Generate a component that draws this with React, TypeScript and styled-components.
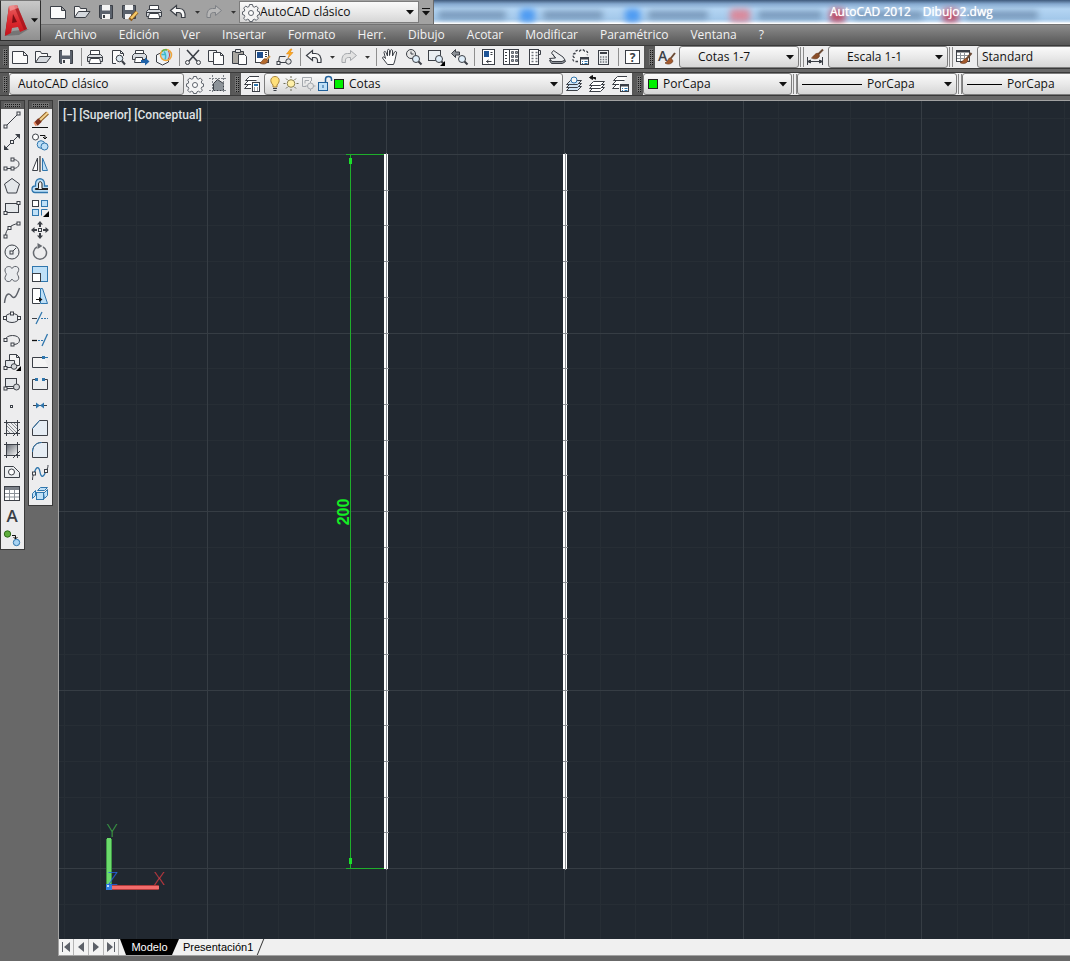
import React from 'react';
import styled, { createGlobalStyle } from 'styled-components';

const Global = createGlobalStyle`
  * { box-sizing: border-box; }
  body { margin: 0; background: #686868; }
  button, select { font: inherit; color: inherit; margin: 0; }
`;

const INK = '#3b3f46';
const BLUE = '#2f76ad';
const SKY = '#bfe0f7';

const Page = styled.div`
  display: flex;
  flex-direction: column;
  min-height: 100vh;
  overflow: hidden;
  font: 12px/16px 'Open Sans', 'Noto Sans', sans-serif;
  color: #111;
`;

/* ---------- header ---------- */

const Header = styled.header`
  display: grid;
  grid-template-columns: 41px minmax(0, 1fr);
  height: 45px;
  background: linear-gradient(#a2a2a2 24px, #5a5a5a 24px, #8c8c8c 25px, #565656 45px);
`;

const AppButton = styled.button`
  display: flex;
  align-items: center;
  width: 41px;
  height: 41px;
  padding: 0 0 0 1px;
  gap: 2px;
  border: 1px solid #2e2e2e;
  border-top-color: #777;
  background: linear-gradient(#c9c9c9, #8f8f8f);
`;

const HeaderRows = styled.div`
  display: flex;
  flex-direction: column;
  min-width: 0;
`;

const TitleRow = styled.div`
  display: flex;
  height: 24px;
`;

const QuickAccess = styled.div`
  display: flex;
  align-items: center;
  padding-left: 6px;
  border-right: 1px solid #6a6a6a;
`;

const Glass = styled.div`
  flex: 1;
  min-width: 0;
  display: grid;
  overflow: hidden;
  background: linear-gradient(#3f5a7c, #86a9cf 4px, #b4d5f3 9px, #a3c8ea 19px, #cfe2f4 22px, #fff 23px);
`;

const GlassTabs = styled.div`
  grid-area: 1 / 1;
  display: flex;
  align-items: center;
  gap: 8px;
  padding: 6px 0 0 4px;
  filter: blur(3px);
  overflow: hidden;
`;

const Smudge = styled.span<{ $w: number; $color?: string; $gap?: number }>`
  flex: none;
  width: ${p => p.$w}px;
  height: ${p => (p.$color ? 13 : 8)}px;
  margin-left: ${p => p.$gap ?? 0}px;
  border-radius: 3px;
  background: ${p => p.$color ?? 'rgba(70, 98, 132, 0.5)'};
`;

const Title = styled.h1`
  grid-area: 1 / 1;
  display: flex;
  gap: 12px;
  margin: 0;
  padding: 4px 0 0 396px;
  font-size: 12px;
  font-weight: 400;
  line-height: 16px;
  white-space: nowrap;
  color: #fff;
  text-shadow: 0 0 1px #fff;
  z-index: 1;
`;

const MenuBar = styled.nav`
  display: flex;
  gap: 22px;
  padding: 3px 0 0 14px;
`;

const MenuItem = styled.button`
  padding: 0;
  border: 0;
  background: none;
  color: #f2f2f2;
  line-height: 16px;
  white-space: nowrap;
`;

/* ---------- tool rows ---------- */

const ToolRow = styled.div`
  display: flex;
  height: 24px;
  margin-bottom: 3px;
  border: solid #3a3a3a;
  border-width: 1px 0;
  background: #565656;
`;

const Bar = styled.div<{ $grow?: boolean; $gap?: number }>`
  display: flex;
  align-items: stretch;
  flex: ${p => (p.$grow ? '1 0 auto' : 'none')};
  margin-right: ${p => p.$gap ?? 0}px;
  background: #ededee;
`;

const Grip = styled.span<{ $dir?: 'h' | 'v' }>`
  flex: none;
  width: ${p => (p.$dir === 'h' ? 'auto' : '9px')};
  height: ${p => (p.$dir === 'h' ? '8px' : 'auto')};
  border: solid #595959;
  border-width: ${p => (p.$dir === 'h' ? '2px 3px' : '3px 2px 3px 3px')};
  background:
    linear-gradient(90deg, #737373 1px, transparent 1px) 0 0 / 2px 2px,
    linear-gradient(#737373 1px, #161616 1px) 0 0 / 2px 2px;
`;

const Rule = styled.span`
  flex: none;
  width: 6px;
  margin: 2px 0;
  background: linear-gradient(#8f8f8f, #8f8f8f) center / 1px 100% no-repeat;
`;

const Rails = styled.span`
  flex: none;
  width: 4px;
  margin: 1px 0 1px 1px;
  border: solid #8a8a8a;
  border-width: 0 1px;
`;

const IconButton = styled.button<{ $w?: number }>`
  display: flex;
  align-items: center;
  justify-content: flex-start;
  flex: none;
  width: ${p => p.$w ?? 23}px;
  height: 22px;
  padding: 0 0 0 2px;
  border: 0;
  background: none;
  color: ${INK};
`;

const CaretButton = styled.button<{ $w?: number }>`
  display: flex;
  align-items: center;
  justify-content: center;
  flex: none;
  width: ${p => p.$w ?? 12}px;
  padding: 0;
  border: 0;
  background: none;
  color: #333;
`;

const Combo = styled.label<{ $w: number; $grow?: boolean; $pad?: number; $flat?: boolean }>`
  display: flex;
  align-items: center;
  flex: ${p => (p.$grow ? '1 0 auto' : 'none')};
  width: ${p => p.$w}px;
  height: 22px;
  padding: 0 4px 0 ${p => p.$pad ?? 6}px;
  border: 1px solid #7d7d7d;
  border-radius: ${p => (p.$flat ? 0 : 3)}px;
  background: linear-gradient(#fafafa, #e9e9e9 50%, #d6d6d6);
  color: #111;
`;

const Select = styled.select`
  appearance: none;
  flex: 1;
  min-width: 0;
  height: 18px;
  padding: 0;
  border: 0;
  background: none;
  line-height: 16px;
`;

const Swatch = styled.span`
  flex: none;
  width: 10px;
  height: 10px;
  margin-right: 5px;
  border: 1px solid #222;
  background: #00f000;
`;

const Stroke = styled.span<{ $w: number }>`
  flex: none;
  width: ${p => p.$w}px;
  height: 1px;
  margin-right: 5px;
  background: #000;
`;

/* ---------- workspace ---------- */

const Workspace = styled.main`
  flex: 1;
  display: flex;
  align-items: stretch;
  padding: 1px 0 5px;
  background: #686868;
`;

const Palette = styled.div<{ $gap: number }>`
  display: flex;
  flex-direction: column;
  align-self: flex-start;
  flex: none;
  width: 25px;
  margin-right: ${p => p.$gap}px;
  border: 1px solid #3a3a3a;
  background: #ededee;
`;

const Sheet = styled.section`
  flex: 1;
  min-width: 0;
  display: flex;
  flex-direction: column;
  border: solid #a2a2a2;
  border-width: 1px 0 1px 1px;
`;

const Viewport = styled.div`
  flex: 1;
  display: grid;
  min-height: 400px;
  background: #212830;
`;

const Drawing = styled.svg`
  grid-area: 1 / 1;
  width: 100%;
  height: 100%;
  min-height: 838px;
`;

const ViewControls = styled.div`
  grid-area: 1 / 1;
  display: flex;
  align-self: start;
  justify-self: start;
  gap: 3px;
  padding: 6px 0 0 4px;
  font-family: Roboto, 'Open Sans', sans-serif;
  font-weight: 500;
  z-index: 1;
`;

const ViewControl = styled.button`
  padding: 0;
  border: 0;
  background: none;
  color: #dfe2e4;
  line-height: 16px;
`;

const TabStrip = styled.div`
  display: flex;
  height: 16px;
  font: 11px/16px 'Liberation Sans', Arial, sans-serif;
  background: #f0f0f0;
`;

const TabNav = styled.button`
  display: flex;
  align-items: center;
  justify-content: center;
  width: 15px;
  padding: 0;
  border: solid #b5b5b5;
  border-width: 0 1px 0 0;
  background: #f3f3f3;
  color: #5c6068;
`;

const ActiveTab = styled.button`
  width: 59px;
  margin-left: 1px;
  padding: 0;
  border: 0;
  background: #000;
  color: #fff;
  line-height: 16px;
  clip-path: polygon(0 0, 100% 0, 52px 100%, 6px 100%);
`;

const Tab = styled.button`
  display: flex;
  justify-content: space-between;
  width: 82px;
  padding: 0 0 0 4px;
  border: 0;
  background: none;
  color: #000;
  line-height: 16px;

  &::after {
    content: '';
    width: 1px;
    height: 16px;
    background: #333;
    transform: skewX(-22deg);
  }
`;

/* ---------- icons ---------- */

const gear = (
  <>
    <path
      d="M7.500 1.500h3l.4 2 1.500.7 1.900-1.100 2 2-1.100 1.900.6 1.400 1.700.5v2.600l-1.700.5-.6 1.400 1.100 1.900-2 2-1.900-1.100-1.500.7-.4 1.600h-3l-.4-1.600-1.500-.7-1.900 1.100-2-2 1.100-1.900-.6-1.400-1.700-.5V8.900l1.700-.5.6-1.400-1.100-1.900 2-2 1.900 1.100 1.500-.7z"
      fill="#f4f4f4"
      stroke="#5f646c"
    />
    <circle cx="9" cy="10" r="2.500" stroke="#5f646c" fill="#fff" />
  </>
);

const node = (x: number, y: number) => <rect x={x - 1.5} y={y - 1.5} width="3" height="3" fill="#f4f4f4" />;
const layers = (y: number, fill = '#fff') => (
  <>
    <path d={`M1.500 ${y + 9.5}l4-4h11l-4 4z`} fill={fill} />
    <path d={`M1.500 ${y + 6.5}l4-4h11l-4 4z`} fill={fill} />
    <path d={`M1.500 ${y + 3.5}l4-4h11l-4 4z`} fill={fill} />
  </>
);
const brush = (
  <>
    <path d="M16.500 5l-5 6" stroke="#6b4a34" strokeWidth="2" />
    <path d="M12 10.500c-3-1-3 3-7 4 3 2 7 1 8-2z" fill="#a3592d" stroke="#6b3b1c" strokeWidth=".7" />
  </>
);
const zoomLens = (
  <>
    <circle cx="12" cy="11" r="3.500" fill="#dfeefa" />
    <path d="M14.500 13.500l3 3" strokeWidth="2" />
  </>
);
const cardIcon = (
  <>
    <rect x="9.500" y="9.500" width="8" height="7" fill="#fff" />
    <path d="M9.500 10.500h8" strokeWidth="2" />
    <path d="M11 13.500h1m1.500 0h3M11 15.500h1m1.500 0h3" stroke={BLUE} />
  </>
);

const glyphs: Record<string, React.ReactNode> = {
  new: <path d="M1.500 3.500h11l4 4v8h-15zM12.500 3.500v4h4" fill="#fbfbfb" />,
  open: (
    <>
      <path d="M1.500 14.500v-11h5l1 2h6v3" fill="#f6f6f6" />
      <path d="M1.500 14.500l4-6h11.500l-4.500 6z" fill="#d5d9de" />
    </>
  ),
  save: (
    <>
      <path d="M2.500 2.500h13v13h-12l-1-1z" fill="#5a616c" />
      <rect x="5" y="2" width="8" height="5.500" fill="#f4f4f4" stroke="none" />
      <rect x="5" y="11" width="8" height="5" fill="#f4f4f4" stroke="none" />
      <rect x="6" y="12" width="2" height="3" fill={INK} stroke="none" />
    </>
  ),
  saveas: (
    <>
      <path d="M1.500 2.500h13v13h-12l-1-1z" fill="#5a616c" />
      <rect x="4" y="2" width="8" height="5" fill="#f4f4f4" stroke="none" />
      <rect x="4" y="11" width="6" height="5" fill="#f4f4f4" stroke="none" />
      <path d="M16 9l-5.500 6-1.500 2" stroke="#8a5a20" strokeWidth="4" />
      <path d="M16 9l-6 6.500" stroke="#f4c867" strokeWidth="2.500" />
    </>
  ),
  print: (
    <>
      <path d="M4.500 7V2.500h9V7" fill="#fff" />
      <path d="M3.500 6.500h11l2 2v5h-15v-5z" fill="#d9dce0" />
      <path d="M4.500 10.500h9l1.500 5h-12z" fill="#fff" />
      <path d="M2 9.500h14" />
    </>
  ),
  preview: (
    <>
      <path d="M7 15.500H3.500v-13h8l3 3V8" fill="#fbfbfb" />
      <path d="M11.500 2.500v3h3" />
      <circle cx="10.500" cy="10.500" r="3.300" fill="#dde8f0" />
      <path d="M13 13l3 3.500" strokeWidth="2" />
    </>
  ),
  publish: (
    <>
      <path d="M3.500 6V2.500h8V6" fill="#fff" />
      <path d="M2.500 5.500h10l2 2v4h-14v-4z" fill="#d9dce0" />
      <path d="M3.500 9.500h7v5h-8z" fill="#fff" />
      <path d="M9 12h4V9.500l4.500 4-4.500 4V15H9z" fill="#1f62a8" stroke="none" />
    </>
  ),
  globe: (
    <>
      <path d="M1.500 7l6-3 6 3v7l-6 3-6-3z" fill="#f2f4f6" />
      <circle cx="11" cy="7" r="5.500" fill="#a9dcf2" stroke="#f0a43c" strokeWidth="1.500" />
      <path d="M9 3.500c2 2 2 6 1 8M6.500 6.500h4" stroke="#3fb7c9" strokeWidth="1.500" />
      <path d="M13 3c2 2 2 6 0 8" stroke="#d8403a" />
      <path d="M7 3.500c1-1.500 3-2 5-1.500" stroke="#55b04c" strokeWidth="1.500" />
    </>
  ),
  cut: (
    <>
      <path d="M3 2l10 11M15 2L5 13" strokeWidth="1.600" />
      <circle cx="3.500" cy="14.500" r="2" />
      <circle cx="14.500" cy="14.500" r="2" />
    </>
  ),
  copy: (
    <>
      <path d="M1.500 2.500h8v11h-8z" fill="#f4f4f4" />
      <path d="M6.500 4.500h7l3 3v9h-10zM13.500 4.500v3h3" fill="#fdfdfd" />
    </>
  ),
  paste: (
    <>
      <path d="M2.500 3.500h11v12h-11z" fill="#a9a6a0" />
      <path d="M5.500 1.500h5v3h-5z" fill="#e6e6e6" />
      <path d="M8.500 6.500h6l2 2v8h-8z" fill="#fdfdfd" />
    </>
  ),
  match: (
    <>
      <rect x="2.500" y="2.500" width="13" height="12" fill="#fff" />
      <rect x="4" y="4" width="6" height="6" fill="#1f4f8f" stroke="none" />
      <path d="M12 4.500h2m-2 2h2m-2 2h2" />
      <path d="M17 8l-4 4" stroke="#d09850" strokeWidth="2" />
      <path d="M13 11c-3-1-3 2-6 4 3 2 7 1 8-2z" fill="#b56a2c" stroke="#6b3b1c" strokeWidth=".7" />
    </>
  ),
  blockedit: (
    <>
      <path d="M9.500 8.500h-6l-1 6H10" />
      {node(2.5, 15)}
      <circle cx="12.500" cy="13.500" r="2.700" fill="#e6e6e6" />
      <path d="M14.500 1l-4 5h3l-1.500 4 5-5.500h-3l2-3.500z" fill="#ffb01e" stroke="#e07f10" strokeWidth=".6" />
    </>
  ),
  undo: <path d="M1.500 7.500l6-5v3h3c4 0 6 3 5.500 9h-3.500c.5-4-1-5-3-5h-2v3z" fill="#f8f8f8" strokeWidth="1.200" />,
  redo: (
    <path d="M16.500 7.500l-6-5v3h-3c-4 0-6 3-5.500 9h3.500c-.5-4 1-5 3-5h2v3z" fill="#e2e2e2" stroke="#a5a8ac" />
  ),
  redoDark: (
    <path d="M16.500 7.500l-6-5v3h-3c-4 0-6 3-5.500 9h3.500c-.5-4 1-5 3-5h2v3z" fill="#b8b8b8" stroke="#7d8085" />
  ),
  pan: (
    <path
      d="M6.500 16.500L1.500 10c0-1.500 1.500-1.500 3 .5L3 4.500c0-1.500 1.500-1.500 2 0L6.500 8 6.500 2.500c0-1.500 2-1.500 2 0v5l1-5c.5-1.500 2-1 2 .5L11.500 8l2-4c1-1 2.500-.5 2 1-1 4-1.500 8.500-3 11.500z"
      fill="#fbfbfb"
    />
  ),
  zoomRt: (
    <>
      <circle cx="7" cy="6" r="4.500" fill="#e6e6e6" />
      <path d="M7 3.500V6h2.500" />
      {zoomLens}
    </>
  ),
  zoomWin: (
    <>
      <rect x="1.500" y="2.500" width="12" height="10" fill="#e9eef2" />
      {zoomLens}
      <path d="M18 13v5h-5z" fill="#000" stroke="none" />
    </>
  ),
  zoomPrev: (
    <>
      <path d="M1.500 5.500l4-4v2.500h4v3h-4V9.500z" fill="#8d9197" />
      {zoomLens}
    </>
  ),
  props: (
    <>
      <rect x="3.500" y="1.500" width="12" height="15" fill="#fff" />
      <rect x="5" y="3" width="5" height="6" fill="#1f5597" stroke="none" />
      <path d="M11.500 4.500h2m-2 2h2M7.500 13.500h5m-5 0l2-1.500m-2 1.500l2 1.500" />
    </>
  ),
  design: (
    <>
      <rect x="1.500" y="1.500" width="15" height="15" fill="#fff" />
      <path d="M7.500 2v14M3 4.500h2m-2 3h2m-2 3h2m-2 3h2" />
      <path d="M9.500 3.500h2v2h-2zm4 0h2v2h-2zm-4 4h2v2h-2zm4 0h2v2h-2zm-4 4h2v2h-2zm4 0h2v2h-2z" fill="#9aa0a8" stroke="#5f646c" />
    </>
  ),
  toolpal: (
    <>
      <rect x="4.500" y="1.500" width="9" height="15" fill="#fff" />
      <path d="M13.500 2.500h2v4h-2" />
      <path d="M6.500 4.500h2m2 0h2m-6 3h2m2 0h2m-6 3h2m2 0h2m-6 3h2m2 0h2" strokeWidth="1.500" stroke="#70757c" />
    </>
  ),
  sheet: (
    <>
      <path d="M1.500 12.500l2 3h11l3-2-1-2z" fill="#8d9197" />
      <path d="M3.500 5l2-2.500 9.500 6.500 2 3-3 1.500H4l-2.500-3 6-.5z" fill="#eceef0" />
      <path d="M7.500 10l-3-4" />
    </>
  ),
  markup: (
    <>
      <path
        d="M7 13.500H4c-2 0-3-3-1-4-2-2-1-4 1-4 0-3 3-4 4.500-2.500 2-2 4-1.500 5 0 3-.5 4 2 2.500 4"
        strokeDasharray="2.500 1.500"
        strokeWidth="1.300"
        fill="#f4f4f4"
      />
      {cardIcon}
    </>
  ),
  calc: (
    <>
      <rect x="4.500" y="2.500" width="10" height="14" fill="#eef0f2" />
      <rect x="6" y="4" width="7" height="2" fill={INK} stroke="none" />
      <path d="M6 9h7M6 11.500h7M6 14h7" strokeWidth="1.500" strokeDasharray="1.500 1.200" stroke="#70757c" />
    </>
  ),
  help: (
    <>
      <rect x="2.500" y="2.500" width="14" height="13" fill="#fff" />
      <text x="9.500" y="13.500" textAnchor="middle" fontSize="12" fontWeight="700" fill={INK} stroke="none">?</text>
    </>
  ),
  textStyle: (
    <>
      <text x="1" y="13" fontSize="14" fontWeight="600" fill={INK} stroke="none">A</text>
      <path d="M18 5l-4 5" stroke="#6b4a34" strokeWidth="2" />
      <path d="M14 10c-3-1-2 3-6 5 3 2 7 1 8-2z" fill="#a3592d" stroke="#6b3b1c" strokeWidth=".7" />
    </>
  ),
  dimStyle: (
    <>
      <path d="M1.500 9v8M16.500 9v8M1.500 13.500h15M1.500 13.500l3-1.500v3zM16.500 13.500l-3-1.500v3z" fill={INK} />
      <path d="M17 1.500l-5 5" stroke="#6b4a34" strokeWidth="2" />
      <path d="M12.500 5.500c-3-1-4 2-7 4.500 3 1.500 7 1 8-2z" fill="#8a4d28" stroke="#6b3b1c" strokeWidth=".7" />
    </>
  ),
  tableStyle: (
    <>
      <rect x="1.500" y="2.500" width="13" height="11" fill="#fff" />
      <path d="M1.500 3.500h13" strokeWidth="2" />
      <path d="M2 7.500h12M2 10.500h8M5.500 5v8M9.500 5v6" stroke="#8b9198" />
      {brush}
    </>
  ),
  gear,
  workspace: (
    <>
      <path d="M4.500 8.500l4-4 6 4v7h-10z" fill="#8d9399" />
      <path d="M3.500 0v18M14.500 0v18M0 3.500h18M0 15.500h18" strokeDasharray="2 1" stroke="#7d8288" />
    </>
  ),
  layerProps: (
    <>
      <path d="M8 13.500H1.500l4-4H8M8 9.500H1.500l4-4h8M13 5.500H2.500l4-4H16" fill="#fff" />
      <rect x="9.500" y="7.500" width="7" height="9" fill="#fff" />
      <rect x="11" y="9" width="4" height="2" fill={BLUE} stroke="none" />
      <path d="M11 13h1m2 0h1m-4 2h1m2 0h1" />
    </>
  ),
  layerCurrent: (
    <>
      {layers(6, '#cfe4f5')}
      <circle cx="9" cy="5" r="3" fill="#f4f4f4" stroke={BLUE} />
    </>
  ),
  layerPrev: (
    <>
      {layers(7)}
      <path d="M2.500 2.500h5v2M1.500 2.500l3-2v4z" fill="#111" stroke="#111" />
    </>
  ),
  layerStates: (
    <>
      <path d="M8 13.500H1.500l4-4H8M8 9.500H1.500l4-4h8M13 5.500H2.500l4-4H16" fill="#fff" />
      {cardIcon}
    </>
  ),
  line: <><path d="M3.500 14.500l11-11" />{node(2.5, 15.5)}{node(15.5, 2.5)}</>,
  xline: (
    <>
      <path d="M2 16L16 2" />
      <path d="M1 17v-5l5 5zM17 1v5l-5-5z" fill={INK} stroke="none" />
      {node(9, 9)}
    </>
  ),
  pline: <><path d="M3 13.500h7c8 0 8-9 0-9H9" />{node(2.5, 13.5)}{node(9.5, 13.5)}{node(9.5, 4.5)}</>,
  polygon: <path d="M9 1.500l7.500 5.500-3 9h-9l-3-9z" fill="#e4e7ea" />,
  rect: <><rect x="2.500" y="4.500" width="13" height="9" fill="#e4e7ea" />{node(2.5, 14)}{node(15.5, 4)}</>,
  arc: <><path d="M2.500 15.500c0-7 5-12 13-13" />{node(2.5, 15.5)}{node(6.5, 7)}{node(15.5, 2.5)}</>,
  circle: <><circle cx="9" cy="9" r="7" fill="#eceef0" /><path d="M9 9l4-4" />{node(8.5, 9.5)}</>,
  cloud: (
    <path
      d="M9 3.500c2-4 9-2 6 3.500-1 1.500-1 2 0 3.500 3 5-4 8-6 3.500-2 5-9 2-6.500-3 1-1.500 1-2 0-3.500C0 2 7-.5 9 3.500z"
      fill="#e9ebee"
      stroke="#5c6068"
    />
  ),
  spline: <path d="M1.500 16c1-9 4-11 7-7s5 0 8-8" strokeWidth="1.400" stroke="#5c6068" />,
  ellipse: <><ellipse cx="9" cy="9" rx="7" ry="4.500" fill="#e9ebee" />{node(2, 9)}{node(16, 9)}{node(9, 4.5)}</>,
  ellipseArc: <><path d="M2.500 9c0-6 14-6 14 0 0 4-4 4.500-7 4.500" />{node(2.5, 9)}{node(9.5, 13.5)}</>,
  insert: (
    <>
      <path d="M6.500 7V1.500h7l3 3v8h-4M13.500 1.500v3h3" fill="#f4f4f4" />
      <path d="M2.500 14.500v-7h9v5" fill="#e2e5e8" />
      <path d="M3 14.500h7" />
      <circle cx="11" cy="13.500" r="2.800" fill="#d4d7da" />
      {node(2.5, 15)}
      <path d="M18 13v5h-5z" fill="#000" stroke="none" />
    </>
  ),
  block: (
    <>
      <rect x="2.500" y="3.500" width="11" height="8" fill="#e2e5e8" />
      <path d="M3 13.500h8" />
      <circle cx="13.500" cy="12" r="3" fill="#d4d7da" />
      {node(2.5, 13.5)}
    </>
  ),
  point: <rect x="7.500" y="8.500" width="2" height="2" fill="#fff" />,
  hatch: (
    <>
      <path d="M4 11l3 3M4 7l7 7M4 4l10 10M8 4l6 6M11 4l3 3" stroke="#8b9096" />
      <path d="M3.500 1v16M14.500 1v16M1 3.500h16M1 14.500h16M10 17l7-7" />
    </>
  ),
  gradient: (
    <>
      <rect x="4" y="4" width="10" height="10" fill="url(#fade)" stroke="none" />
      <path d="M3.500 1v16M14.500 1v16M1 3.500h16M1 14.500h16M10 17l7-7" />
    </>
  ),
  region: <><path d="M1.500 3.500h9l6 6v5h-15z" fill="#eceef0" /><circle cx="8.500" cy="9" r="3" fill="#fff" /></>,
  table: (
    <>
      <rect x="1.500" y="1.500" width="15" height="14" fill="#fff" />
      <rect x="2" y="2" width="14" height="3" fill="#7b8088" stroke="none" />
      <path d="M2 8.500h14M2 12h14M6.500 5v10M11.500 5v10" stroke="#8b9198" />
    </>
  ),
  text: <text x="9" y="15" textAnchor="middle" fontSize="17" fontWeight="600" fill={INK} stroke="none">A</text>,
  addSel: (
    <>
      <circle cx="4.500" cy="5" r="3.200" fill="#5fae3c" stroke="#2f6b1c" />
      <path d="M9 6.500h3.500V10M10.500 8l2 2 2-2" stroke="#111" />
      <circle cx="13.500" cy="13.500" r="3.200" fill="#a9d4f4" stroke={BLUE} />
    </>
  ),
  erase: (
    <>
      <path d="M16.500 2L8 10" stroke="#8a5a20" strokeWidth="4" />
      <path d="M17 1.500L8 10" stroke="#f3d28e" strokeWidth="2" />
      <path d="M9 9l-4 4" stroke="#7b2f1c" strokeWidth="5" />
      <path d="M5 12.500l-1.500 1" stroke="#e88d66" strokeWidth="4" />
      <path d="M1 16.500h16" stroke="#111" />
    </>
  ),
  copyObj: (
    <>
      <circle cx="4.500" cy="4" r="3" fill="#fff" />
      <path d="M9 2.500h5V6M12 4l2 2 2-2" stroke="#111" />
      <circle cx="10" cy="11.500" r="3.800" fill={SKY} stroke={BLUE} />
      <circle cx="13.500" cy="13.500" r="3.500" fill={SKY} stroke={BLUE} />
    </>
  ),
  mirror: (
    <>
      <path d="M6.500 3v12.500h-5z" fill="#fff" />
      <path d="M11.500 3v12.500h5z" fill={SKY} stroke={BLUE} />
      <path d="M9 1v16" stroke="#111" />
    </>
  ),
  offset: (
    <>
      <path d="M17 15.500H4c-4 0-4-6.500 0-6.500h.5V7c0-7 9-7 9 0v2H17" fill={SKY} stroke={BLUE} strokeWidth="1.300" />
      <path d="M17 12.500H5c-1.500 0-1.500-1 0-1h2.500V7c0-3 3.500-3 3.500 0v4.500h6" fill="#f4f4f4" stroke="#222" />
    </>
  ),
  array: (
    <>
      <rect x="1.500" y="1.500" width="6" height="6" fill="#fff" />
      <rect x="10.500" y="1.500" width="6" height="6" fill={SKY} stroke={BLUE} />
      <rect x="1.500" y="10.500" width="6" height="6" fill={SKY} stroke={BLUE} />
      <path d="M10.500 16.500v-6h6" stroke={BLUE} />
      <path d="M18 12v6h-6z" fill="#000" stroke="none" />
    </>
  ),
  move: (
    <>
      <path d="M9 2v4M9 12v4M2 9h4M12 9h4" strokeWidth="2" />
      <path d="M9 0l3 3.500H6zM9 18l3-3.500H6zM0 9l3.500-3v6zM18 9l-3.500-3v6z" fill={INK} stroke="none" />
      {node(9, 9)}
    </>
  ),
  rotate: (
    <>
      <path d="M12 4a6.500 6.500 0 1 1-6 0" strokeWidth="1.500" stroke="#666a70" />
      <path d="M6.500 0v6l5-3z" fill="#666a70" stroke="none" />
    </>
  ),
  scale: (
    <>
      <rect x="1.500" y="1.500" width="15" height="15" fill={SKY} stroke={BLUE} />
      <rect x="1.500" y="8.500" width="8" height="8" fill="#fff" />
    </>
  ),
  stretch: (
    <>
      <path d="M9 1.500H1.500v15H9" fill="#fff" />
      <path d="M9.500 1.500h2l5 15h-7z" fill={SKY} stroke={BLUE} />
      <path d="M5 12.500h4" stroke="#111" />
      <path d="M8 10l3.500 2.500L8 15z" fill="#111" stroke="none" />
    </>
  ),
  trim: (
    <>
      <path d="M1 9.500h5" />
      <path d="M10 9.500h7" stroke={BLUE} strokeDasharray="2 1" />
      <path d="M5 15l6-12" stroke={BLUE} strokeWidth="1.300" />
    </>
  ),
  extend: (
    <>
      <path d="M1 9.500h5" stroke="#111" strokeWidth="1.300" />
      <path d="M7 9.500h5" stroke={BLUE} strokeDasharray="2 1" />
      <path d="M11 15l5.500-12" stroke={BLUE} strokeWidth="1.300" />
    </>
  ),
  breakPt: (
    <>
      <path d="M17 14.500H1.500v-10H13" fill="#f4f4f4" />
      <path d="M12 4.500h5" stroke={BLUE} />
      <rect x="11" y="3" width="3" height="3" fill={BLUE} stroke="none" />
    </>
  ),
  breakObj: (
    <>
      <path d="M4 4.500H1.500v10h15v-10H14" fill="#eceef0" />
      <rect x="4" y="3" width="3" height="3" fill={BLUE} stroke="none" />
      <rect x="11" y="3" width="3" height="3" fill={BLUE} stroke="none" />
    </>
  ),
  join: (
    <>
      <path d="M2 8.500h14" />
      <path d="M5 5.500l4 3-4 3zM13 5.500l-4 3 4 3z" fill={BLUE} stroke="none" />
    </>
  ),
  chamfer: (
    <>
      <path d="M1.500 16.500v-7l7-8h8v15z" fill="#e6edf4" />
      <path d="M1.500 9.500l7-8" stroke={BLUE} />
    </>
  ),
  fillet: (
    <>
      <path d="M1.500 16.500V11c0-6 4-9.500 9-9.500h6v15z" fill="#e6edf4" />
      <path d="M1.500 11c0-6 4-9.500 9-9.500" stroke={BLUE} />
    </>
  ),
  blend: (
    <>
      <path d="M3 11c2-8 5-8 6-2s4 6 6-2" stroke={BLUE} strokeWidth="1.300" />
      <path d="M1.500 17c0-3 .5-5 1.500-6M15.500 7c1-1 1.500-3 1.500-5" />
      {node(3, 10.5)}
      {node(15, 8)}
    </>
  ),
  explode: (
    <>
      <path d="M6.500 5.500l3-3h7l-3 3zM12.500 8.500l4-4v6l-3 3z" fill={SKY} stroke={BLUE} />
      <rect x="5.500" y="7.500" width="7" height="7" fill={SKY} stroke={BLUE} />
      <path d="M4.500 5.500l-3 3v5l3-3z" fill={SKY} stroke={BLUE} />
    </>
  ),
};

const Icon = ({ name }: { name: string }) => (
  <svg
    width="18"
    height="18"
    viewBox="0 0 18 18"
    fill="none"
    stroke="currentColor"
    overflow="visible"
    aria-hidden="true"
  >
    {glyphs[name]}
  </svg>
);

const Arrow = ({ size = 8 }: { size?: number }) => (
  <svg width={size} height="5" viewBox="0 0 8 5" pointerEvents="none" aria-hidden="true">
    <path d="M0 0h8L4 4.500z" fill="currentColor" />
  </svg>
);

type Tool = [icon: string, label: string] | 'rule' | 'caret';

const Tools = ({ items, width }: { items: Tool[]; width?: number }) => (
  <>
    {items.map((t, i) =>
      t === 'rule' ? (
        <Rule key={i} />
      ) : t === 'caret' ? (
        <CaretButton key={i} aria-label="Más opciones">
          <Arrow size={5} />
        </CaretButton>
      ) : (
        <IconButton key={i} $w={width} aria-label={t[1]}>
          <Icon name={t[0]} />
        </IconButton>
      )
    )}
  </>
);

interface ComboProps {
  label: string;
  value: string;
  width: number;
  pad?: number;
  grow?: boolean;
  flat?: boolean;
  children?: React.ReactNode;
}

const ComboBox = ({ label, value, width, pad, grow, flat, children }: ComboProps) => (
  <Combo $w={width} $pad={pad} $grow={grow} $flat={flat}>
    {children}
    <Select aria-label={label} defaultValue={value}>
      <option>{value}</option>
    </Select>
    <Arrow />
  </Combo>
);

/* ---------- data ---------- */

const quickTools: Tool[] = [
  ['new', 'Nuevo'],
  ['open', 'Abrir'],
  ['save', 'Guardar'],
  ['saveas', 'Guardar como'],
  ['print', 'Trazar'],
  ['undo', 'Deshacer'],
  'caret',
  ['redoDark', 'Rehacer'],
  'caret',
];

const menus = [
  'Archivo', 'Edición', 'Ver', 'Insertar', 'Formato', 'Herr.', 'Dibujo',
  'Acotar', 'Modificar', 'Paramétrico', 'Ventana', '?',
];

const standardTools: Tool[] = [
  ['new', 'Nuevo'], ['open', 'Abrir'], ['save', 'Guardar'], 'rule',
  ['print', 'Trazar'], ['preview', 'Vista preliminar'], ['publish', 'Publicar'], ['globe', 'Impresión 3D'], 'rule',
  ['cut', 'Cortar'], ['copy', 'Copiar'], ['paste', 'Pegar'], ['match', 'Igualar propiedades'],
  ['blockedit', 'Editor de bloques'], 'rule',
  ['undo', 'Deshacer'], 'caret', ['redo', 'Rehacer'], 'caret', 'rule',
  ['pan', 'Encuadre'], ['zoomRt', 'Zoom tiempo real'], ['zoomWin', 'Zoom ventana'], ['zoomPrev', 'Zoom previo'], 'rule',
  ['props', 'Propiedades'], ['design', 'DesignCenter'], ['toolpal', 'Paletas'], ['sheet', 'Conjunto de planos'],
  ['markup', 'Marcas'], ['calc', 'Calculadora'], 'rule',
  ['help', 'Ayuda'],
];

const drawTools: Tool[] = [
  ['line', 'Línea'], ['xline', 'Línea auxiliar'], ['pline', 'Polilínea'], ['polygon', 'Polígono'],
  ['rect', 'Rectángulo'], ['arc', 'Arco'], ['circle', 'Círculo'], ['cloud', 'Nube de revisión'],
  ['spline', 'Spline'], ['ellipse', 'Elipse'], ['ellipseArc', 'Arco elíptico'], ['insert', 'Insertar bloque'],
  ['block', 'Crear bloque'], ['point', 'Punto'], ['hatch', 'Sombreado'], ['gradient', 'Degradado'],
  ['region', 'Región'], ['table', 'Tabla'], ['text', 'Texto'], ['addSel', 'Añadir seleccionado'],
];

const modifyTools: Tool[] = [
  ['erase', 'Borrar'], ['copyObj', 'Copiar'], ['mirror', 'Simetría'], ['offset', 'Desfase'],
  ['array', 'Matriz'], ['move', 'Desplazar'], ['rotate', 'Girar'], ['scale', 'Escala'],
  ['stretch', 'Estirar'], ['trim', 'Recortar'], ['extend', 'Alargar'], ['breakPt', 'Partir en un punto'],
  ['breakObj', 'Partir'], ['join', 'Juntar'], ['chamfer', 'Chaflán'], ['fillet', 'Empalme'],
  ['blend', 'Fusionar curvas'], ['explode', 'Descomponer'],
];

/* ---------- drawing ---------- */

const STEP = 35.7;
const ORIGIN = { x: 327, y: 53 };
const grid = (origin: number, count: number, round: (v: number) => number) =>
  Array.from({ length: count }, (_, n) => {
    const i = n - 10;
    return { pos: round(origin + i * STEP), major: i % 5 === 0 };
  });
const columns = grid(ORIGIN.x, 80, Math.floor);
const rows = grid(ORIGIN.y, 60, Math.round);
const gridColor = (major: boolean) => (major ? '#363d44' : '#272e35');

const Wall = ({ x }: { x: number }) => (
  <g>
    <rect x={x - 2} y="53" width="4" height="715" fill="#fff" />
    <rect x={x} y="52" width="1" height="717" fill="#8b8f94" />
    {rows
      .filter(r => r.pos > 60 && r.pos < 765)
      .map(r => (
        <rect key={r.pos} x={x - 2} y={r.pos} width="5" height="1" fill="#8b8f94" />
      ))}
  </g>
);

const Model = () => (
  <Drawing role="img" aria-label="Dibujo2.dwg">
    {[false, true].map(major => (
      <g key={String(major)} fill={gridColor(major)}>
        {columns.filter(c => c.major === major).map(c => <rect key={c.pos} x={c.pos} y="0" width="1" height="100%" />)}
        {rows.filter(r => r.major === major).map(r => <rect key={r.pos} x="0" y={r.pos} width="100%" height="1" />)}
      </g>
    ))}
    <Wall x={327} />
    <Wall x={506} />
    <g fill="#1fae2b">
      <rect x="291" y="53" width="1" height="715" />
      <rect x="287" y="53" width="38" height="1" />
      <rect x="287" y="767" width="38" height="1" />
      <rect x="290" y="57" width="3" height="6" fill="#1be02a" />
      <rect x="290" y="757" width="3" height="6" fill="#1be02a" />
    </g>
    <text
      transform="translate(290 411) rotate(-90)"
      textAnchor="middle"
      fontFamily="'Liberation Sans', Arial, sans-serif"
      fontSize="16"
      fontWeight="700"
      fill="#14ee24"
    >
      200
    </text>
    <g>
      <rect x="47" y="738" width="6" height="48" fill="#3f9a45" />
      <rect x="48" y="737" width="4" height="48" fill="#6cdb6c" />
      <rect x="52" y="784" width="48" height="5" rx="1" fill="#b23c3c" />
      <rect x="52" y="785" width="48" height="3" fill="#f26c6c" />
      <rect x="47" y="783" width="6" height="6" fill="#2f7fe0" />
      <rect x="48" y="784" width="2" height="2" fill="#bfe0ff" />
      <g fontFamily="Lato, 'Open Sans', sans-serif" fontWeight="300" fontSize="18" textAnchor="middle">
        <text x="53" y="736" fill="#3fa548">Y</text>
        <text x="100" y="784" fill="#d23c44">X</text>
        <text x="54" y="784" fill="#2463d8">Z</text>
      </g>
    </g>
  </Drawing>
);

const navArrows: [string, string][] = [
  ['Primera', 'M1 0h1v10H1zM9 0v10L3 5z'],
  ['Anterior', 'M8 0v10L2 5z'],
  ['Siguiente', 'M2 0v10l6-5z'],
  ['Última', 'M1 0v10l6-5zM8 0h1v10H8z'],
];

/* ---------- page ---------- */

export default function App() {
  return (
    <Page>
      <Global />
      <svg width="0" height="0" style={{ display: 'block' }} aria-hidden="true">
        <linearGradient id="fade" x1="0" y1="0" x2="1" y2="1">
          <stop offset="0" stopColor="#6a6f77" />
          <stop offset="1" stopColor="#f2f2f2" />
        </linearGradient>
        <linearGradient id="logoRed" x1="0" y1="0" x2="0" y2="1">
          <stop offset="0" stopColor="#e86464" />
          <stop offset=".5" stopColor="#dd2a30" />
          <stop offset="1" stopColor="#c3141c" />
        </linearGradient>
      </svg>
      <Header>
        <AppButton aria-label="Menú de la aplicación">
          <svg width="27" height="35" viewBox="0 0 27 35" aria-hidden="true">
            <path d="M2 33l9-5 16-2-10 6z" fill="#5d5d5d" opacity=".6" />
            <path d="M7 3l3 1-4 27-3 1z" fill="#8f1016" />
            <path d="M7 3l8-1 10 24-7 3-2-5-6 1-1 5-6 3z" fill="url(#logoRed)" />
            <path d="M11 11l4 8-5 1z" fill="#7c1016" />
            <path d="M15 2l10 24-3 1L12 3z" fill="#9e141b" opacity=".7" />
            <path d="M7 3l8-1 1 3-8 3z" fill="#f4a0a0" opacity=".7" />
          </svg>
          <Arrow size={7} />
        </AppButton>
        <HeaderRows>
          <TitleRow>
            <QuickAccess>
              <Tools items={quickTools} width={24} />
              <ComboBox label="Espacio de trabajo" value="AutoCAD clásico" width={180} pad={2} flat>
                <Icon name="gear" />
              </ComboBox>
              <CaretButton $w={14} aria-label="Personalizar">
                <svg width="8" height="8" viewBox="0 0 8 8" aria-hidden="true">
                  <path d="M0 0h8v1H0zM0 3h8L4 7.500z" fill="#111" />
                </svg>
              </CaretButton>
            </QuickAccess>
            <Glass>
              <GlassTabs aria-hidden="true">
                <Smudge $w={68} />
                <Smudge $w={15} $color="#4d9af2" $gap={6} />
                <Smudge $w={60} />
                <Smudge $w={15} $color="#4d9af2" $gap={14} />
                <Smudge $w={60} />
                <Smudge $w={20} $color="#d98a9c" $gap={14} />
                <Smudge $w={64} />
                <Smudge $w={15} $color="#c04a64" />
                <Smudge $w={70} />
                <Smudge $w={15} $color="#c04a64" $gap={12} />
                <Smudge $w={72} />
              </GlassTabs>
              <Title>
                <span>AutoCAD 2012</span>
                <span>Dibujo2.dwg</span>
              </Title>
            </Glass>
          </TitleRow>
          <MenuBar>
            {menus.map(m => (
              <MenuItem key={m}>{m}</MenuItem>
            ))}
          </MenuBar>
        </HeaderRows>
      </Header>

      <ToolRow>
        <Grip />
        <Bar $gap={2}>
          <Tools items={standardTools} />
        </Bar>
        <Grip />
        <Bar $grow>
          <IconButton $w={24} aria-label="Estilo de texto"><Icon name="textStyle" /></IconButton>
          <ComboBox label="Estilo de cota" value="Cotas 1-7" width={120} pad={18} />
          <Rails />
          <IconButton $w={24} aria-label="Estilos de cota"><Icon name="dimStyle" /></IconButton>
          <ComboBox label="Escala" value="Escala 1-1" width={120} pad={18} />
          <Rails />
          <IconButton $w={24} aria-label="Estilo de tabla"><Icon name="tableStyle" /></IconButton>
          <ComboBox label="Estilo de tabla" value="Standard" width={120} pad={4} grow />
        </Bar>
      </ToolRow>

      <ToolRow>
        <Grip />
        <Bar $gap={2}>
          <ComboBox label="Espacio de trabajo actual" value="AutoCAD clásico" width={175} pad={8} />
          <Tools items={[['gear', 'Parámetros'], ['workspace', 'Mi espacio de trabajo']]} />
        </Bar>
        <Grip />
        <Bar $gap={2}>
          <Tools items={[['layerProps', 'Propiedades de capas']]} />
          <ComboBox label="Capa" value="Cotas" width={299} pad={4}>
            <svg width="65" height="18" viewBox="0 0 65 18" fill="none" stroke={INK} aria-hidden="true">
              <path d="M4 10C0 6 2 1.500 6 1.500S12 6 8 10v2H4z" fill="#ffe07a" stroke="#a8843c" />
              <path d="M4 13.500h4M4.500 15.500h3" />
              <circle cx="22" cy="8.500" r="3.800" fill="#fff0a8" stroke="#8a8050" />
              <path
                d="M22 1v2M22 14v2M14.500 8.500h2M27.500 8.500h2M17 3.500l1.500 1.500M27 3.500l-1.500 1.500M17 13.500l1.500-1.500M27 13.500l-1.500-1.500"
                stroke="#70705c"
              />
              <path d="M37 11.500h-3.500v-9h9V6" stroke="#a4a8ad" />
              <path d="M36 8.500v-3h4" stroke="#a4a8ad" />
              <circle cx="41.500" cy="11" r="3" fill="#e4e4e4" stroke="#a4a8ad" />
              <path d="M41.500 6v2M41.500 14v2M36.500 11h2M44.500 11h2" stroke="#a4a8ad" />
              <rect x="49.500" y="7.500" width="9" height="8" fill={SKY} stroke="#1f5f99" />
              <path d="M56.500 7V4c0-3.500 6-3.500 6 0v2" stroke="#1f5f99" strokeWidth="1.500" />
              <path d="M54 10v3" stroke="#1f5f99" />
            </svg>
            <Swatch />
          </ComboBox>
          <Tools
            items={[
              ['layerCurrent', 'Definir capa actual'],
              ['layerPrev', 'Capa previa'],
              ['layerStates', 'Estados de capa'],
            ]}
          />
        </Bar>
        <Grip />
        <Bar $grow>
          <ComboBox label="Color" value="PorCapa" width={149} pad={4}>
            <Swatch />
          </ComboBox>
          <Rails />
          <ComboBox label="Tipo de línea" value="PorCapa" width={160} pad={4}>
            <Stroke $w={60} />
          </ComboBox>
          <Rails />
          <ComboBox label="Grosor de línea" value="PorCapa" width={140} pad={4} grow>
            <Stroke $w={35} />
          </ComboBox>
        </Bar>
      </ToolRow>

      <Workspace>
        <Palette $gap={3} role="toolbar" aria-label="Dibujo">
          <Grip $dir="h" />
          <Tools items={drawTools} />
        </Palette>
        <Palette $gap={5} role="toolbar" aria-label="Modificar">
          <Grip $dir="h" />
          <Tools items={modifyTools} />
        </Palette>
        <Sheet>
          <Viewport>
            <ViewControls>
              <ViewControl>[−]</ViewControl>
              <ViewControl>[Superior]</ViewControl>
              <ViewControl>[Conceptual]</ViewControl>
            </ViewControls>
            <Model />
          </Viewport>
          <TabStrip>
            {navArrows.map(([label, d]) => (
              <TabNav key={label} aria-label={label}>
                <svg width="10" height="10" viewBox="0 0 10 10" aria-hidden="true">
                  <path d={d} fill="currentColor" />
                </svg>
              </TabNav>
            ))}
            <ActiveTab>Modelo</ActiveTab>
            <Tab>Presentación1</Tab>
          </TabStrip>
        </Sheet>
      </Workspace>
    </Page>
  );
}
